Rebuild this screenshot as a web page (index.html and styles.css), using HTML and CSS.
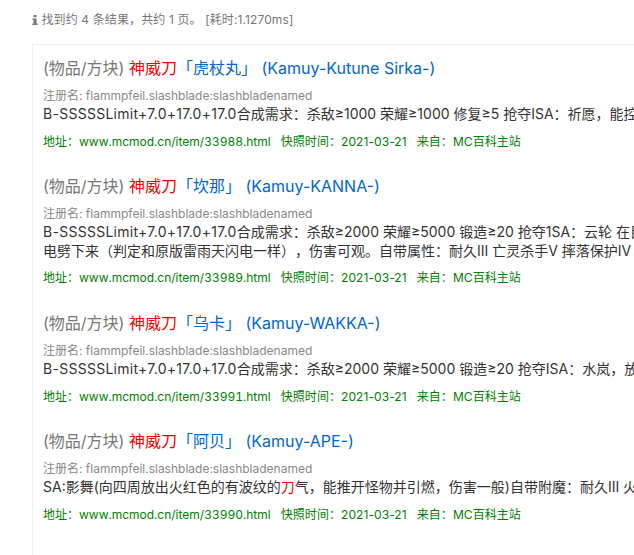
FILE: index.html
```html
<!DOCTYPE html>
<html lang="zh-CN">
<head>
<meta charset="utf-8">
<title>搜索结果</title>
<link rel="stylesheet" href="styles.css">
</head>
<body>
<main class="page">
  <p class="stats"><svg class="info-icon" viewBox="0 0 6 10" width="6" height="10" aria-hidden="true"><path d="M1.5 0h3v2.2h-3zM.5 3.4h4v5h1.1V10H.4V8.4h1.1V5H.5z"/></svg> 找到约 4 条结果，共约 1 页。 [耗时:1.1270ms]</p>
  <section class="results">
    <article class="result">
      <h3 class="title"><span class="kind">(物品/方块)</span> <a href="#"><em>神威刀</em>「虎杖丸」 (Kamuy-Kutune Sirka-)</a></h3>
      <div class="reg">注册名: flammpfeil.slashblade:slashbladenamed</div>
      <p class="desc"><span class="attrs">B-SSSSSLimit+7.0+17.0+17.0</span>合成需求：杀敌≥1000 荣耀≥1000 修复≥5 抢夺ISA：祈愿，能控制周围的怪物不能行动</p>
      <p class="meta"><span class="url">地址：www.mcmod.cn/item/33988.html</span><span>快照时间：2021-03-21</span><span>来自：MC百科主站</span></p>
    </article>
    <article class="result">
      <h3 class="title"><span class="kind">(物品/方块)</span> <a href="#"><em>神威刀</em>「坎那」 (Kamuy-KANNA-)</a></h3>
      <div class="reg">注册名: flammpfeil.slashblade:slashbladenamed</div>
      <p class="desc"><span class="attrs">B-SSSSSLimit+7.0+17.0+17.0</span>合成需求：杀敌≥2000 荣耀≥5000 锻造≥20 抢夺1SA：云轮 在目标头顶召唤乌云<br>电劈下来（判定和原版雷雨天闪电一样），伤害可观。自带属性：耐久III 亡灵杀手V 摔落保护IV 火焰附加</p>
      <p class="meta"><span class="url">地址：www.mcmod.cn/item/33989.html</span><span>快照时间：2021-03-21</span><span>来自：MC百科主站</span></p>
    </article>
    <article class="result">
      <h3 class="title"><span class="kind">(物品/方块)</span> <a href="#"><em>神威刀</em>「乌卡」 (Kamuy-WAKKA-)</a></h3>
      <div class="reg">注册名: flammpfeil.slashblade:slashbladenamed</div>
      <p class="desc"><span class="attrs">B-SSSSSLimit+7.0+17.0+17.0</span>合成需求：杀敌≥2000 荣耀≥5000 锻造≥20 抢夺ISA：水岚，放出水流攻击前方</p>
      <p class="meta"><span class="url">地址：www.mcmod.cn/item/33991.html</span><span>快照时间：2021-03-21</span><span>来自：MC百科主站</span></p>
    </article>
    <article class="result">
      <h3 class="title"><span class="kind">(物品/方块)</span> <a href="#"><em>神威刀</em>「阿贝」 (Kamuy-APE-)</a></h3>
      <div class="reg">注册名: flammpfeil.slashblade:slashbladenamed</div>
      <p class="desc">SA:影舞(向四周放出火红色的有波纹的<em>刀</em>气，能推开怪物并引燃，伤害一般)自带附魔：耐久III 火焰附加II</p>
      <p class="meta"><span class="url">地址：www.mcmod.cn/item/33990.html</span><span>快照时间：2021-03-21</span><span>来自：MC百科主站</span></p>
    </article>
  </section>
</main>
</body>
</html>
```
FILE: styles.css
```css
html, body {
  margin: 0;
  height: 100%;
  overflow: hidden;
  background: #fff;
}
body {
  font-family: Inter, "Noto Sans CJK SC", sans-serif;
  font-size: 14px;
  color: #333;
  text-spacing-trim: space-all;
}
.page {
  padding: 10px 0 0 32px;
}
.stats {
  margin: 0 0 14px;
  height: 20px;
  line-height: 20px;
  font-size: 12px;
  letter-spacing: .12px;
  color: #777;
  white-space: nowrap;
}
.info-icon {
  fill: #777;
  vertical-align: -1px;
}
.results {
  border: 1px solid #eee;
  border-right: 0;
  padding: 10px 0 0 10px;
  height: 520px;
  overflow: hidden;
}
.result {
  margin-bottom: 21.5px;
  white-space: nowrap;
}
.title {
  margin: 0;
  height: 24px;
  padding-top: 1px;
  line-height: 24px;
  font-size: 16px;
  font-weight: 400;
}
.kind {
  color: #777;
}
.title a {
  color: #06c;
  text-decoration: none;
}
em {
  font-style: normal;
  color: #e00;
}
.reg {
  margin-top: 7px;
  height: 18px;
  line-height: 18px;
  font-size: 12px;
  color: #888;
}
.desc {
  margin: 0;
  line-height: 18.2px;
  font-size: 14px;
  color: #333;
}
.attrs {
  letter-spacing: .27px;
}
.meta {
  margin: 8.6px 0 0;
  display: flex;
  gap: 10px;
  line-height: 20px;
  font-size: 12px;
  letter-spacing: .07px;
  color: #008000;
}
.url {
  letter-spacing: 0;
  font-variant-numeric: tabular-nums;
}
```
